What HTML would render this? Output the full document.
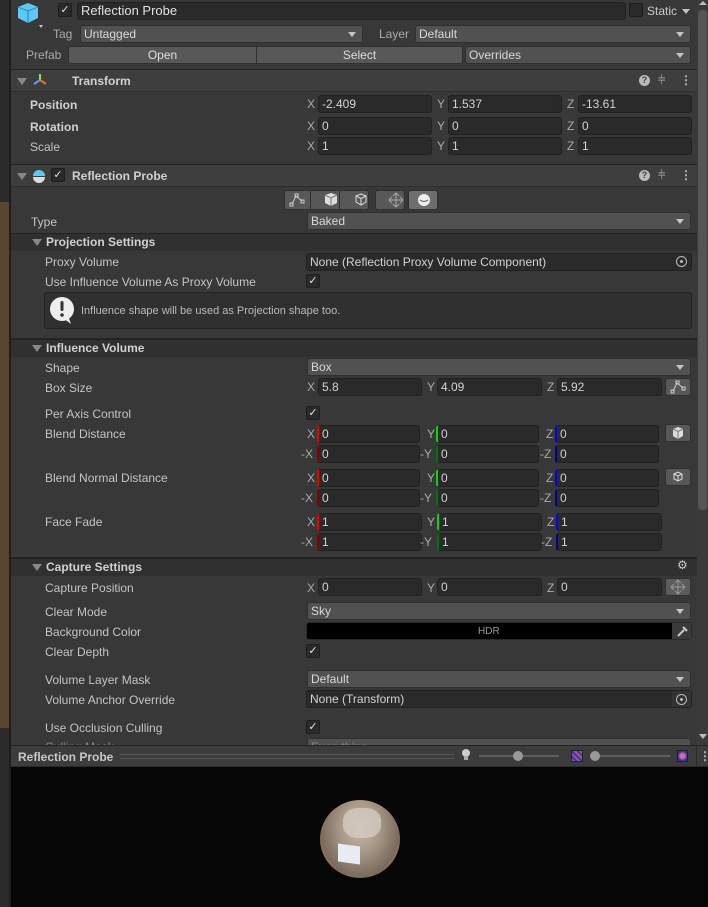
<!DOCTYPE html>
<html><head><meta charset="utf-8"><style>
*{box-sizing:border-box;margin:0;padding:0}
body{width:708px;height:907px;background:#383838;font-family:"Liberation Sans",sans-serif;font-size:12px;color:#c4c4c4;position:relative;overflow:hidden}
.a{position:absolute}
.t{position:absolute;white-space:nowrap;line-height:16px}
.f{position:absolute;background:#2a2a2a;border:1px solid #212121;border-radius:3px;height:18px;line-height:16px;padding-left:3px;color:#d2d2d2;white-space:nowrap;overflow:hidden}
.d{position:absolute;background:#515151;border:1px solid #2f2f2f;border-radius:3px;height:18px;line-height:16px;padding-left:3px;color:#d8d8d8;white-space:nowrap;overflow:hidden}
.d:after{content:"";position:absolute;right:6px;top:6px;border-left:4px solid transparent;border-right:4px solid transparent;border-top:5px solid #c4c4c4}
.b{position:absolute;background:#585858;border:1px solid #303030;border-radius:3px;height:18px;line-height:16px;text-align:center;color:#dedede}
.cb{position:absolute;width:14px;height:14px;background:#2a2a2a;border:1px solid #1e1e1e;border-radius:2px;color:#e0e0e0;font-size:11px;line-height:12px;text-align:center}
.hd{position:absolute;left:11px;width:686px;background:#3e3e3e;border-top:1px solid #232323;border-bottom:1px solid #2e2e2e}
.sh{position:absolute;left:11px;width:686px;height:18px;background:#303030;border-top:1px solid #232323}
.tri{position:absolute;border-left:5px solid transparent;border-right:5px solid transparent;border-top:7px solid #888}
.bold{font-weight:bold;color:#d0d0d0}
.ax{position:absolute;line-height:16px;color:#aaa;text-align:right}
.r{border-left:2px solid #e00}.g{border-left:2px solid #0d0}.bl{border-left:2px solid #00f}
.r2{border-left:2px solid #800}.g2{border-left:2px solid #070}.bl2{border-left:2px solid #008}
</style></head><body>
<div class="a" style="left:0;top:0;width:9px;height:907px;background:#2b2b2b"></div>
<div class="a" style="left:0;top:202px;width:9px;height:526px;background:#5b4530"></div>
<div class="a" style="left:9px;top:0;width:2px;height:907px;background:#1e1e1e"></div>
<div class="a" style="left:697px;top:0;width:11px;height:746px;background:#3a3a3a"></div>
<div class="a" style="left:698px;top:10px;width:9px;height:500px;background:#555;border-radius:4px"></div>
<div class="a" style="left:699px;top:734px;border-left:4px solid transparent;border-right:4px solid transparent;border-top:5px solid #bbb"></div>
<div class="a" style="left:699px;top:1px;border-left:4px solid transparent;border-right:4px solid transparent;border-bottom:4px solid #bbb"></div>

<svg class="a" style="left:17px;top:2px" width="28" height="26" viewBox="0 0 28 26"><path d="M11 1 L21 5 L21 16 L11 21 L1 16 L1 5Z" fill="#5ec8f4"/><path d="M1 5 L11 9 L21 5 M11 9 V21" stroke="#2a8fc0" stroke-width="1.2" fill="none"/><path d="M22 23 l4 0 l-2 3z" fill="#c4c4c4"/></svg>
<div class="cb" style="left:58px;top:3px">✓</div>
<div class="f" style="left:77px;top:2px;width:549px;color:#e0e0e0;font-size:13px">Reflection Probe</div>
<div class="cb" style="left:629px;top:3px"></div>
<div class="t" style="left:647px;top:3px;color:#c8c8c8">Static</div>
<div class="a" style="left:682px;top:9px;border-left:4px solid transparent;border-right:4px solid transparent;border-top:5px solid #c4c4c4"></div>
<div class="t" style="left:53px;top:26px;color:#aaa">Tag</div>
<div class="d" style="left:80px;top:25px;width:283px">Untagged</div>
<div class="t" style="left:379px;top:26px;color:#aaa">Layer</div>
<div class="d" style="left:415px;top:25px;width:276px">Default</div>
<div class="t" style="left:26px;top:47px;color:#aaa">Prefab</div>
<div class="b" style="left:68px;top:46px;width:189px;border-radius:3px 0 0 3px">Open</div>
<div class="b" style="left:256px;top:46px;width:207px;border-radius:0 3px 3px 0">Select</div>
<div class="d" style="left:465px;top:46px;width:226px">Overrides</div>

<div class="hd" style="top:69px;height:23px"></div>
<div class="tri" style="left:17px;top:78px"></div>
<svg class="a" style="left:33px;top:73px" width="14" height="14" viewBox="0 0 14 14"><path d="M7 7 V1" stroke="#8ee34f" stroke-width="2"/><path d="M7 7 L1 11" stroke="#4aa8f0" stroke-width="2"/><path d="M7 7 L13 11" stroke="#f06a3c" stroke-width="2"/></svg>
<div class="t bold" style="left:72px;top:73px">Transform</div>
<div class="a" style="left:639px;top:75px;width:11px;height:11px;border-radius:50%;background:#bbb;color:#3e3e3e;font-size:9px;line-height:11px;text-align:center;font-weight:bold">?</div>
<div class="t" style="left:658px;top:72px;color:#bbb;font-size:13px">⫩</div>
<div class="t" style="left:680px;top:72px;color:#bbb;font-weight:bold">⋮</div>

<div class="t bold" style="left:30px;top:97px">Position</div>
<div class="t bold" style="left:30px;top:119px">Rotation</div>
<div class="t" style="left:30px;top:139px">Scale</div>
<div class="ax" style="left:307px;top:96px">X</div><div class="f" style="left:318px;top:95px;width:114px">-2.409</div>
<div class="ax" style="left:437px;top:96px">Y</div><div class="f" style="left:448px;top:95px;width:114px">1.537</div>
<div class="ax" style="left:567px;top:96px">Z</div><div class="f" style="left:578px;top:95px;width:114px">-13.61</div>
<div class="ax" style="left:307px;top:118px">X</div><div class="f" style="left:318px;top:117px;width:114px">0</div>
<div class="ax" style="left:437px;top:118px">Y</div><div class="f" style="left:448px;top:117px;width:114px">0</div>
<div class="ax" style="left:567px;top:118px">Z</div><div class="f" style="left:578px;top:117px;width:114px">0</div>
<div class="ax" style="left:307px;top:138px">X</div><div class="f" style="left:318px;top:137px;width:114px">1</div>
<div class="ax" style="left:437px;top:138px">Y</div><div class="f" style="left:448px;top:137px;width:114px">1</div>
<div class="ax" style="left:567px;top:138px">Z</div><div class="f" style="left:578px;top:137px;width:114px">1</div>

<div class="hd" style="top:164px;height:23px"></div>
<div class="tri" style="left:17px;top:173px"></div>
<svg class="a" style="left:32px;top:169px" width="14" height="14" viewBox="0 0 14 14"><path d="M1 7 A6 6 0 0 1 13 7Z" fill="#5ec8f4"/><path d="M1 8 A6 6 0 0 0 13 8Z" fill="#ddd"/></svg>
<div class="cb" style="left:51px;top:168px">✓</div>
<div class="t bold" style="left:72px;top:168px">Reflection Probe</div>
<div class="a" style="left:639px;top:170px;width:11px;height:11px;border-radius:50%;background:#bbb;color:#3e3e3e;font-size:9px;line-height:11px;text-align:center;font-weight:bold">?</div>
<div class="t" style="left:658px;top:167px;color:#bbb;font-size:13px">⫩</div>
<div class="t" style="left:680px;top:167px;color:#bbb;font-weight:bold">⋮</div>

<div class="b" style="left:284px;top:190px;width:27px;height:20px;border-radius:3px 0 0 3px"></div>
<div class="b" style="left:310px;top:190px;width:30px;height:20px;border-radius:0"></div>
<div class="b" style="left:339px;top:190px;width:30px;height:20px;border-radius:0 3px 3px 0"></div>
<div class="b" style="left:375px;top:190px;width:30px;height:20px"></div>
<div class="b" style="left:408px;top:190px;width:30px;height:20px;background:#6e6e6e"></div>
<svg class="a" style="left:284px;top:190px" width="160" height="20" viewBox="0 0 160 20">
<path d="M8 14 L12 6 L18 11" stroke="#ccc" fill="none"/><rect x="6" y="13" width="3" height="3" fill="none" stroke="#ccc"/><rect x="11" y="4" width="3" height="3" fill="none" stroke="#ccc"/><rect x="17" y="10" width="3" height="3" fill="none" stroke="#ccc"/>
<path d="M41 5 L47 3 L53 5 L53 13 L47 16 L41 13Z" fill="#ddd"/><path d="M41 5 L47 8 L53 5 M47 8V16" stroke="#777" fill="none"/>
<path d="M72 6 L77 4 L82 6 L82 12 L77 15 L72 12Z M72 6 L77 8.5 L82 6 M77 8.5V15" stroke="#ddd" fill="none"/>
<path d="M106 10 H118 M112 4 V16 M109 6 l3-3 3 3 M109 14 l3 3 3-3 M108 7 l-3 3 3 3 M116 7 l3 3-3 3" stroke="#aaa" fill="none"/>
<circle cx="140" cy="10" r="6" fill="#eee"/><path d="M136 10 q4 3 8 0" stroke="#555" fill="none"/>
</svg>

<div class="t" style="left:31px;top:214px">Type</div>
<div class="d" style="left:307px;top:212px;width:384px">Baked</div>

<div class="sh" style="top:233px"></div>
<div class="tri" style="left:32px;top:239px"></div>
<div class="t bold" style="left:46px;top:234px">Projection Settings</div>
<div class="t" style="left:45px;top:254px">Proxy Volume</div>
<div class="f" style="left:306px;top:253px;width:386px">None (Reflection Proxy Volume Component)</div>
<div class="a" style="left:676px;top:256px;width:11px;height:11px;border:1.5px solid #bbb;border-radius:50%"></div><div class="a" style="left:680px;top:260px;width:3px;height:3px;background:#bbb;border-radius:50%"></div>
<div class="t" style="left:45px;top:274px">Use Influence Volume As Proxy Volume</div>
<div class="cb" style="left:306px;top:274px">✓</div>
<div class="a" style="left:44px;top:292px;width:648px;height:37px;background:#303030;border:1px solid #232323;border-radius:3px"></div>
<svg class="a" style="left:49px;top:296px" width="28" height="30" viewBox="0 0 28 30"><circle cx="13" cy="13" r="12" fill="#eee"/><path d="M14 22 L22 28 L19 20Z" fill="#eee"/><rect x="11.5" y="5" width="3" height="10" rx="1.5" fill="#333"/><circle cx="13" cy="19" r="1.8" fill="#333"/></svg>
<div class="t" style="left:81px;top:303px;font-size:11px;color:#bbb">Influence shape will be used as Projection shape too.</div>

<div class="a" style="left:11px;top:338px;width:686px;height:1px;background:#232323"></div>
<div class="sh" style="top:339px"></div>
<div class="tri" style="left:32px;top:345px"></div>
<div class="t bold" style="left:46px;top:340px">Influence Volume</div>
<div class="t" style="left:45px;top:360px">Shape</div>
<div class="d" style="left:307px;top:358px;width:384px">Box</div>
<div class="t" style="left:45px;top:380px">Box Size</div>
<div class="ax" style="left:307px;top:379px">X</div><div class="f" style="left:318px;top:378px;width:104px">5.8</div>
<div class="ax" style="left:427px;top:379px">Y</div><div class="f" style="left:437px;top:378px;width:105px">4.09</div>
<div class="ax" style="left:547px;top:379px">Z</div><div class="f" style="left:557px;top:378px;width:105px">5.92</div>
<div class="b" style="left:665px;top:378px;width:26px;height:18px"></div>
<svg class="a" style="left:665px;top:378px" width="26" height="18" viewBox="0 0 26 18"><path d="M8 13 L12 5 L18 10" stroke="#ccc" fill="none"/><rect x="6" y="12" width="3" height="3" fill="none" stroke="#ccc"/><rect x="11" y="3" width="3" height="3" fill="none" stroke="#ccc"/><rect x="17" y="9" width="3" height="3" fill="none" stroke="#ccc"/></svg>
<div class="t" style="left:45px;top:406px">Per Axis Control</div>
<div class="cb" style="left:306px;top:406px">✓</div>

<div class="t" style="left:45px;top:426px">Blend Distance</div>
<div class="ax" style="left:307px;top:426px">X</div><div class="f r" style="left:317px;top:425px;width:103px">0</div>
<div class="ax" style="left:427px;top:426px">Y</div><div class="f g" style="left:436px;top:425px;width:103px">0</div>
<div class="ax" style="left:546px;top:426px">Z</div><div class="f bl" style="left:555px;top:425px;width:104px">0</div>
<div class="b" style="left:665px;top:424px;width:26px"></div>
<svg class="a" style="left:665px;top:424px" width="26" height="18"><path d="M8 5 L13 3 L18 5 L18 12 L13 15 L8 12Z" fill="#ddd"/><path d="M8 5 L13 7.5 L18 5 M13 7.5V15" stroke="#777" fill="none"/></svg>
<div class="ax" style="left:301px;top:446px">-X</div><div class="f r2" style="left:317px;top:445px;width:103px">0</div>
<div class="ax" style="left:420px;top:446px">-Y</div><div class="f g2" style="left:436px;top:445px;width:103px">0</div>
<div class="ax" style="left:540px;top:446px">-Z</div><div class="f bl2" style="left:555px;top:445px;width:104px">0</div>

<div class="t" style="left:45px;top:470px">Blend Normal Distance</div>
<div class="ax" style="left:307px;top:470px">X</div><div class="f r" style="left:317px;top:469px;width:103px">0</div>
<div class="ax" style="left:427px;top:470px">Y</div><div class="f g" style="left:436px;top:469px;width:103px">0</div>
<div class="ax" style="left:546px;top:470px">Z</div><div class="f bl" style="left:555px;top:469px;width:104px">0</div>
<div class="b" style="left:665px;top:468px;width:26px"></div>
<svg class="a" style="left:665px;top:468px" width="26" height="18"><path d="M9 6 L13 4 L17 6 L17 11 L13 13 L9 11Z M9 6 L13 8 L17 6 M13 8V13" stroke="#ddd" fill="none"/></svg>
<div class="ax" style="left:301px;top:490px">-X</div><div class="f r2" style="left:317px;top:489px;width:103px">0</div>
<div class="ax" style="left:420px;top:490px">-Y</div><div class="f g2" style="left:436px;top:489px;width:103px">0</div>
<div class="ax" style="left:540px;top:490px">-Z</div><div class="f bl2" style="left:555px;top:489px;width:104px">0</div>

<div class="t" style="left:45px;top:514px">Face Fade</div>
<div class="ax" style="left:307px;top:514px">X</div><div class="f r" style="left:317px;top:513px;width:105px">1</div>
<div class="ax" style="left:427px;top:514px">Y</div><div class="f g" style="left:437px;top:513px;width:105px">1</div>
<div class="ax" style="left:547px;top:514px">Z</div><div class="f bl" style="left:556px;top:513px;width:106px">1</div>
<div class="ax" style="left:301px;top:534px">-X</div><div class="f r2" style="left:317px;top:533px;width:105px">1</div>
<div class="ax" style="left:420px;top:534px">-Y</div><div class="f g2" style="left:437px;top:533px;width:105px">1</div>
<div class="ax" style="left:541px;top:534px">-Z</div><div class="f bl2" style="left:556px;top:533px;width:106px">1</div>

<div class="a" style="left:11px;top:557px;width:686px;height:1px;background:#232323"></div>
<div class="sh" style="top:558px"></div>
<div class="tri" style="left:32px;top:564px"></div>
<div class="t bold" style="left:46px;top:559px">Capture Settings</div>
<div class="t" style="left:677px;top:557px;color:#ccc;font-size:12px">⚙</div>
<div class="t" style="left:45px;top:580px">Capture Position</div>
<div class="ax" style="left:307px;top:580px">X</div><div class="f" style="left:318px;top:578px;width:104px">0</div>
<div class="ax" style="left:427px;top:580px">Y</div><div class="f" style="left:437px;top:578px;width:105px">0</div>
<div class="ax" style="left:547px;top:580px">Z</div><div class="f" style="left:557px;top:578px;width:105px">0</div>
<div class="b" style="left:665px;top:578px;width:26px;background:#5c5c5c"></div>
<svg class="a" style="left:665px;top:578px" width="26" height="18"><path d="M7 9 H19 M13 3 V15 M10 5 l3-3 3 3 M10 13 l3 3 3-3 M9 6 l-3 3 3 3 M17 6 l3 3-3 3" stroke="#999" fill="none"/></svg>
<div class="t" style="left:45px;top:604px">Clear Mode</div>
<div class="d" style="left:307px;top:602px;width:384px">Sky</div>
<div class="t" style="left:45px;top:624px">Background Color</div>
<div class="a" style="left:306px;top:622px;width:386px;height:18px;background:#000;border:1px solid #2a2a2a;border-radius:3px"></div>
<div class="t" style="left:478px;top:624px;font-size:10px;color:#999">HDR</div>
<div class="a" style="left:672px;top:623px;width:19px;height:16px;background:#3a3a3a"></div>
<svg class="a" style="left:674px;top:623px" width="16" height="16"><path d="M4 13 L10 7 M9 4 l4 4" stroke="#ccc" stroke-width="2"/></svg>
<div class="t" style="left:45px;top:644px">Clear Depth</div>
<div class="cb" style="left:306px;top:644px">✓</div>
<div class="t" style="left:45px;top:672px">Volume Layer Mask</div>
<div class="d" style="left:307px;top:670px;width:384px">Default</div>
<div class="t" style="left:45px;top:692px">Volume Anchor Override</div>
<div class="f" style="left:306px;top:690px;width:386px">None (Transform)</div>
<div class="a" style="left:672px;top:691px;width:19px;height:16px;background:#333"></div>
<div class="a" style="left:676px;top:694px;width:11px;height:11px;border:1.5px solid #bbb;border-radius:50%"></div><div class="a" style="left:680px;top:698px;width:3px;height:3px;background:#bbb;border-radius:50%"></div>
<div class="t" style="left:45px;top:720px">Use Occlusion Culling</div>
<div class="cb" style="left:306px;top:720px">✓</div>
<div class="t" style="left:45px;top:739px;color:#888">Culling Mask</div>
<div class="d" style="left:307px;top:738px;width:384px;color:#888">Everything</div>

<div class="a" style="left:11px;top:745px;width:697px;height:22px;background:#3c3c3c;border-top:1px solid #232323;border-bottom:1px solid #2a2a2a"></div>
<div class="t bold" style="left:18px;top:749px;color:#c8c8c8">Reflection Probe</div>
<div class="a" style="left:120px;top:754px;width:334px;height:1px;background:#555"></div>
<div class="a" style="left:120px;top:758px;width:334px;height:1px;background:#555"></div>
<div class="a" style="left:462px;top:749px;width:8px;height:8px;border-radius:50%;background:#ccc"></div>
<div class="a" style="left:464px;top:756px;width:4px;height:4px;background:#aaa"></div>
<div class="a" style="left:479px;top:755px;width:80px;height:2px;background:#5e5e5e"></div>
<div class="a" style="left:513px;top:751px;width:10px;height:10px;border-radius:50%;background:#999"></div>
<div class="a" style="left:571px;top:750px;width:12px;height:12px;background:repeating-linear-gradient(45deg,#b04a9a 0 2px,#3a3a9a 2px 4px);border:1px solid #222"></div>
<div class="a" style="left:590px;top:755px;width:80px;height:2px;background:#5e5e5e"></div>
<div class="a" style="left:590px;top:751px;width:10px;height:10px;border-radius:50%;background:#999"></div>
<div class="a" style="left:677px;top:750px;width:11px;height:12px;background:radial-gradient(circle,#e07090 30%,#3030a0 70%);border:1px solid #222"></div>
<div class="a" style="left:696px;top:746px;width:1px;height:20px;background:#2a2a2a"></div>
<div class="t" style="left:699px;top:748px;color:#bbb;font-weight:bold">⋮</div>

<div class="a" style="left:11px;top:767px;width:697px;height:140px;background:#060606"></div>
<div class="a" style="left:320px;top:800px;width:80px;height:78px;border-radius:50%;background:radial-gradient(ellipse at 50% 35%,#c8bcb0 0%,#a89888 35%,#7a6a5c 70%,#c89070 90%,#503020 100%)"></div>
<div class="a" style="left:343px;top:808px;width:38px;height:30px;border-radius:40%;background:#d5cbc0;opacity:.8"></div>
<div class="a" style="left:338px;top:845px;width:22px;height:18px;background:#e8ecf4;transform:skewY(8deg)"></div>
</body></html>
